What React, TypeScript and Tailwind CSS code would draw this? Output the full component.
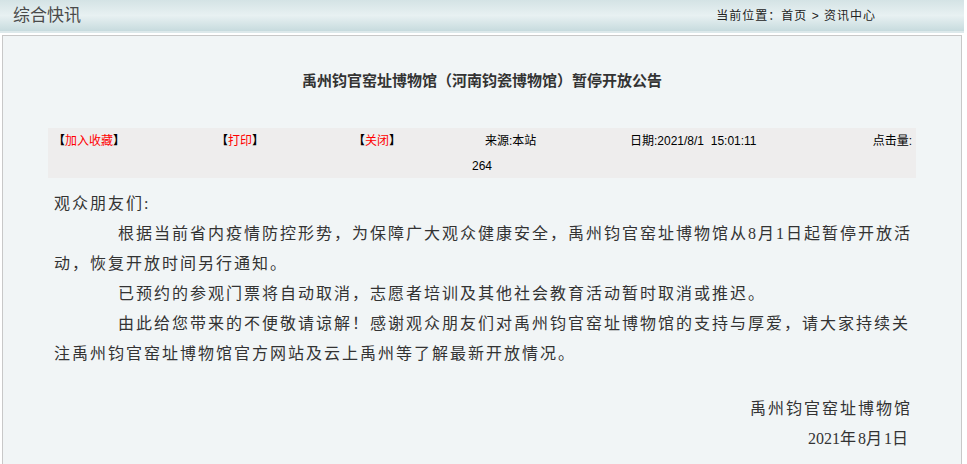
export default function App() {
  const body = '"Liberation Serif", "Noto Sans CJK SC", serif'
  const sans = '"Liberation Sans", "Noto Sans CJK SC", sans-serif'

  return (
    <div className="w-[964px] bg-white text-[#333]" style={{ fontFamily: sans }}>
      {/* header bar */}
      <div className="h-[33px] flex items-center justify-between border-b-[2px] border-[#dde9eb] bg-gradient-to-b from-[#d4e3e5] via-[#e8f1f2] to-[#c7dbde]">
        <span className="pl-[13px] text-[17px] text-[#4a4a4a]" style={{ fontFamily: body }}>
          综合快讯
        </span>
        <span className="pr-[88px] text-[12px] text-[#222] tracking-[1px]">当前位置：首页 &gt; 资讯中心</span>
      </div>

      {/* article panel */}
      <div className="mx-[2px] mt-[2px] border border-[#c8c8c8] bg-[#f1f5f6] pt-[35px] pb-[10px]">
        <h1 className="text-center text-[15px] leading-[20px] font-bold text-[#333]">
          禹州钧官窑址博物馆（河南钧瓷博物馆）暂停开放公告
        </h1>

        <div className="mx-[45px] mt-[37px]">
          {/* info bar */}
          <div className="bg-[#eeeded] text-[12px] text-black">
            <div className="grid grid-cols-[163px_137px_132px_145px_1fr] h-[25px] items-center pl-[5px] pr-[4px]">
              <span>
                <b>【</b>
                <span className="text-[#ff0000]">加入收藏</span>
                <b>】</b>
              </span>
              <span>
                <b>【</b>
                <span className="text-[#ff0000]">打印</span>
                <b>】</b>
              </span>
              <span>
                <b>【</b>
                <span className="text-[#ff0000]">关闭</span>
                <b>】</b>
              </span>
              <span>来源:本站</span>
              <span className="flex justify-between">
                <span className="whitespace-pre">日期:2021/8/1  15:01:11</span>
                <span>点击量:</span>
              </span>
            </div>
            <div className="h-[25px] flex items-center justify-center">264</div>
          </div>

          {/* body */}
          <div
            className="mt-[11px] pl-[6px] text-[16px] leading-[30px] tracking-[2px] text-[#333]"
            style={{ fontFamily: body }}
          >
            <p>观众朋友们:</p>
            <p className="indent-[64px]">
              根据当前省内疫情防控形势，为保障广大观众健康安全，禹州钧官窑址博物馆从8月1日起暂停开放活动，恢复开放时间另行通知。
            </p>
            <p className="indent-[64px]">
              已预约的参观门票将自动取消，志愿者培训及其他社会教育活动暂时取消或推迟。
            </p>
            <p className="indent-[64px]">
              由此给您带来的不便敬请谅解！感谢观众朋友们对禹州钧官窑址博物馆的支持与厚爱，请大家持续关注禹州钧官窑址博物馆官方网站及云上禹州等了解最新开放情况。
            </p>

            <div className="mt-[25px] text-right pr-[4px]">
              <p>禹州钧官窑址博物馆</p>
              <p className="pr-[2px]">
                <span className="tracking-normal">2021</span>年<span className="tracking-normal">8</span>月
                <span className="tracking-normal">1</span>日
              </p>
            </div>
          </div>
        </div>
      </div>
    </div>
  )
}
